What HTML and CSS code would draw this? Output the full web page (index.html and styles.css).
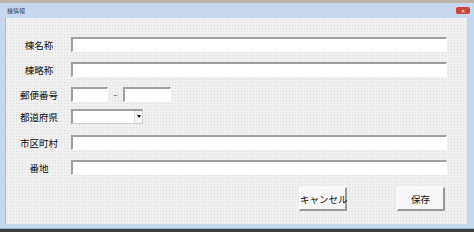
FILE: index.html
```html
<!DOCTYPE html>
<html lang="ja">

<head>
  <meta charset="UTF-8">
  <meta name="viewport" content="width=device-width, initial-scale=1.0">
  <title>棟情報</title>
  <link rel="stylesheet" href="styles.css">
</head>

<body>
  <div class="top-strip"></div>
  <div class="window">

    <div class="titlebar">
      <span class="title">棟情報</span>
      <span class="close">&#x2715;</span>
    </div>

    <div class="client">

      <div class="row">
        <label class="label" for="name">棟名称</label>
        <input type="text" id="name" class="field wide">
      </div>

      <div class="row">
        <label class="label" for="short">棟略称</label>
        <input type="text" id="short" class="field wide">
      </div>

      <div class="row">
        <label class="label" for="zip1">郵便番号</label>
        <input type="text" id="zip1" class="field zip1">
        <span class="dash">&minus;</span>
        <input type="text" id="zip2" class="field zip2">
      </div>

      <div class="row row-pref">
        <label class="label" for="pref">都道府県</label>
        <div class="combo">
          <span class="combo-text"></span>
          <span class="combo-btn"></span>
        </div>
      </div>

      <div class="row row-city">
        <label class="label" for="city">市区町村</label>
        <input type="text" id="city" class="field wide">
      </div>

      <div class="row">
        <label class="label" for="addr">番地</label>
        <input type="text" id="addr" class="field wide">
      </div>

      <div class="buttons">
        <button class="btn">キャンセル</button>
        <button class="btn">保存</button>
      </div>
    </div>
  </div>
</body>

</html>
```

FILE: styles.css
```css
* {
  margin: 0;
  padding: 0;
  box-sizing: border-box;
  font-family: "Noto Sans CJK JP", "Noto Sans", sans-serif;
}

body {
  width: 474px;
  height: 232px;
  background: #3c4046;
  overflow: hidden;
}

.top-strip {
  height: 3px;
  background: #bdb5ac;
}

.window {
  height: 226px;
  background: #c7d8ee;
  padding: 0 7px 4px 5px;
  display: flex;
  flex-direction: column;
  border-bottom: 1px solid #9fb4cf;
}

.titlebar {
  height: 15px;
  display: flex;
  align-items: center;
  padding: 0 0 0 2px;
}

.title {
  font-size: 6px;
  color: #2a3550;
}

.close {
  margin-left: auto;
  margin-right: -3px;
  width: 14px;
  height: 7px;
  background: #c9463a;
  color: #fff;
  font-size: 5px;
  line-height: 7px;
  text-align: center;
  border-radius: 2px;
}

.client {
  flex: 1;
  background-color: #f0f0f0;
  background-image: radial-gradient(circle, #dcdcdc 0.5px, transparent 0.7px);
  background-size: 3px 3px;
  border-left: 1px solid #a9bcd6;
  padding: 19px 20px 0 0;
  display: flex;
  flex-direction: column;
  gap: 10px;
}

.row {
  display: flex;
  align-items: center;
  height: 15px;
}

.row-pref {
  margin-top: -3px;
}

.row-city {
  margin-top: 1px;
}

.label {
  width: 65px;
  padding: 0 10px 0 11px;
  text-align: center;
  font-size: 9.5px;
  color: #111;
  white-space: nowrap;
}

.field {
  height: 15px;
  background: #fff;
  border: 1px solid #fff;
  border-top: 2px solid #a0a0a0;
  border-left: 2px solid #a0a0a0;
  outline: none;
}

.wide {
  flex: 1;
}

.zip1 {
  width: 37px;
}

.dash {
  width: 15px;
  text-align: center;
  font-size: 8px;
  color: #444;
}

.zip2 {
  width: 48px;
}

.combo {
  width: 72px;
  height: 15px;
  display: flex;
  background: #fff;
  border-top: 2px solid #a0a0a0;
  border-left: 2px solid #a0a0a0;
  border-right: 1px solid #d0d0d0;
  border-bottom: 1px solid #d0d0d0;
}

.combo-text {
  flex: 1;
}

.combo-btn {
  width: 8px;
  background: #f4f4f4;
  border-left: 1px solid #e0e0e0;
  position: relative;
}

.combo-btn::after {
  content: "";
  position: absolute;
  left: 2px;
  top: 4px;
  border-left: 2px solid transparent;
  border-right: 2px solid transparent;
  border-top: 3px solid #111;
}

.buttons {
  display: flex;
  justify-content: flex-end;
  gap: 50px;
  margin-top: 2px;
  padding-right: 2px;
}

.btn {
  width: 48px;
  height: 24px;
  padding: 0;
  white-space: nowrap;
  background: #f6f6f6;
  border: 1px solid #fff;
  border-right: 2px solid #9a9a9a;
  border-bottom: 2px solid #9a9a9a;
  font-size: 9.5px;
  color: #111;
}
```
